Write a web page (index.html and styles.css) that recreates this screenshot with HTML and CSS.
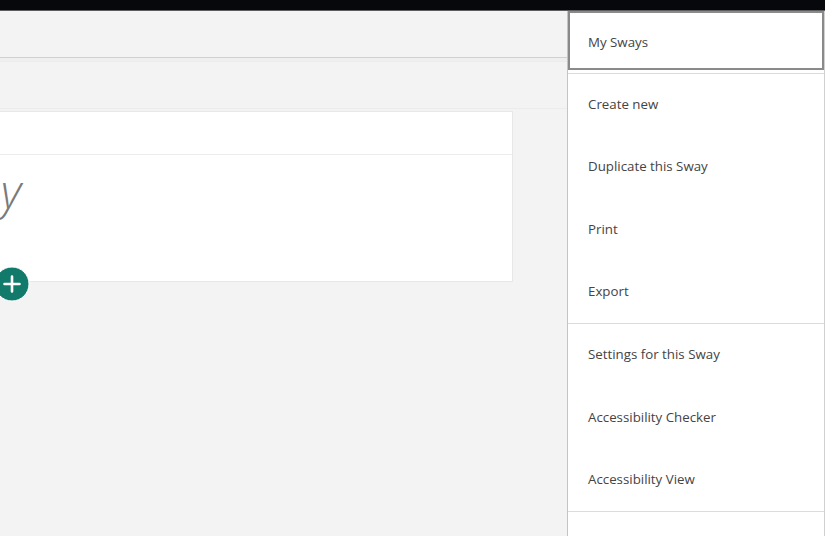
FILE: index.html
```html
<!DOCTYPE html>
<html lang="en">
<head>
<meta charset="utf-8">
<title>Sway</title>
<link rel="stylesheet" href="styles.css">
</head>
<body>
<div class="topbar"></div>
<div class="main">
  <div class="canvas">
    <div class="toolbar"></div>
    <div class="band"></div>
    <div class="stage">
      <div class="card">
        <div class="card-top"></div>
        <div class="card-body">
          <div class="title-wrap"><span class="title">Title your Sway</span></div>
        </div>
        <div class="add-btn">
          <svg width="36" height="36" viewBox="0 0 36 36"><circle cx="18" cy="18" r="17" fill="#117a6b" stroke="#fff" stroke-width="1"/><path d="M18 10.5v15M10.5 18h15" stroke="#fff" stroke-width="2.6" stroke-linecap="round"/></svg>
        </div>
      </div>
    </div>
  </div>
  <div class="panel">
    <div class="item item-active">My Sways</div>
    <div class="group">
      <div class="item">Create new</div>
      <div class="item">Duplicate this Sway</div>
      <div class="item">Print</div>
      <div class="item">Export</div>
    </div>
    <div class="group">
      <div class="item">Settings for this Sway</div>
      <div class="item">Accessibility Checker</div>
      <div class="item">Accessibility View</div>
    </div>
    <div class="group"></div>
  </div>
</div>
</body>
</html>
```
FILE: styles.css
```css
html, body {
  margin: 0;
  padding: 0;
}
body {
  width: 825px;
  height: 536px;
  overflow: hidden;
  background: #f3f3f3;
  font-family: "Open Sans", "Noto Sans", "Liberation Sans", sans-serif;
}
.topbar {
  height: 10px;
  background: #07080b;
  border-bottom: 1px solid #5e5e5e;
}
.main {
  display: flex;
  height: 525px;
}
.canvas {
  width: 567px;
  flex: none;
  display: flex;
  flex-direction: column;
}
.toolbar {
  height: 46px;
  border-bottom: 1px solid #d0d0d0;
  background: #f3f3f3;
}
.band {
  height: 3px;
  background: #efefef;
  border-bottom: 1px solid #ececec;
}
.stage {
  flex: 1;
  border-top: 1px solid #ececec;
  margin-top: 46px;
  padding-top: 2px;
}
.card {
  position: relative;
  width: 512px;
  background: #fff;
  border: 1px solid #e7e7e7;
  border-left: none;
}
.card-top {
  height: 42px;
  border-bottom: 1px solid #ececec;
}
.card-body {
  height: 126px;
}
.title-wrap {
  width: 21px;
  display: flex;
  justify-content: flex-end;
  padding-top: 8px;
}
.title {
  white-space: nowrap;
  font-family: "Open Sans", "Noto Sans", sans-serif;
  font-weight: 300;
  font-style: italic;
  font-size: 47px;
  color: #7a7a7a;
  line-height: 56px;
}
.add-btn {
  position: absolute;
  left: -6px;
  bottom: -21px;
  width: 36px;
  height: 36px;
}
.add-btn svg {
  display: block;
}
.panel {
  width: 256px;
  flex: none;
  background: #fff;
  border-left: 1px solid #c4c4c4;
  border-right: 1px solid #d0d0d0;
  display: flex;
  flex-direction: column;
}
.item {
  height: 62.3px;
  box-sizing: border-box;
  display: flex;
  align-items: center;
  padding-left: 20px;
  padding-bottom: 2px;
  font-size: 13.3px;
  color: #444;
}
.item-active {
  height: 59px;
  border: 2px solid #8a8a8a;
  padding-left: 18px;
  padding-bottom: 0;
  padding-top: 2px;
  margin-bottom: 3px;
}
.group {
  border-top: 1px solid #dcdcdc;
}
```
